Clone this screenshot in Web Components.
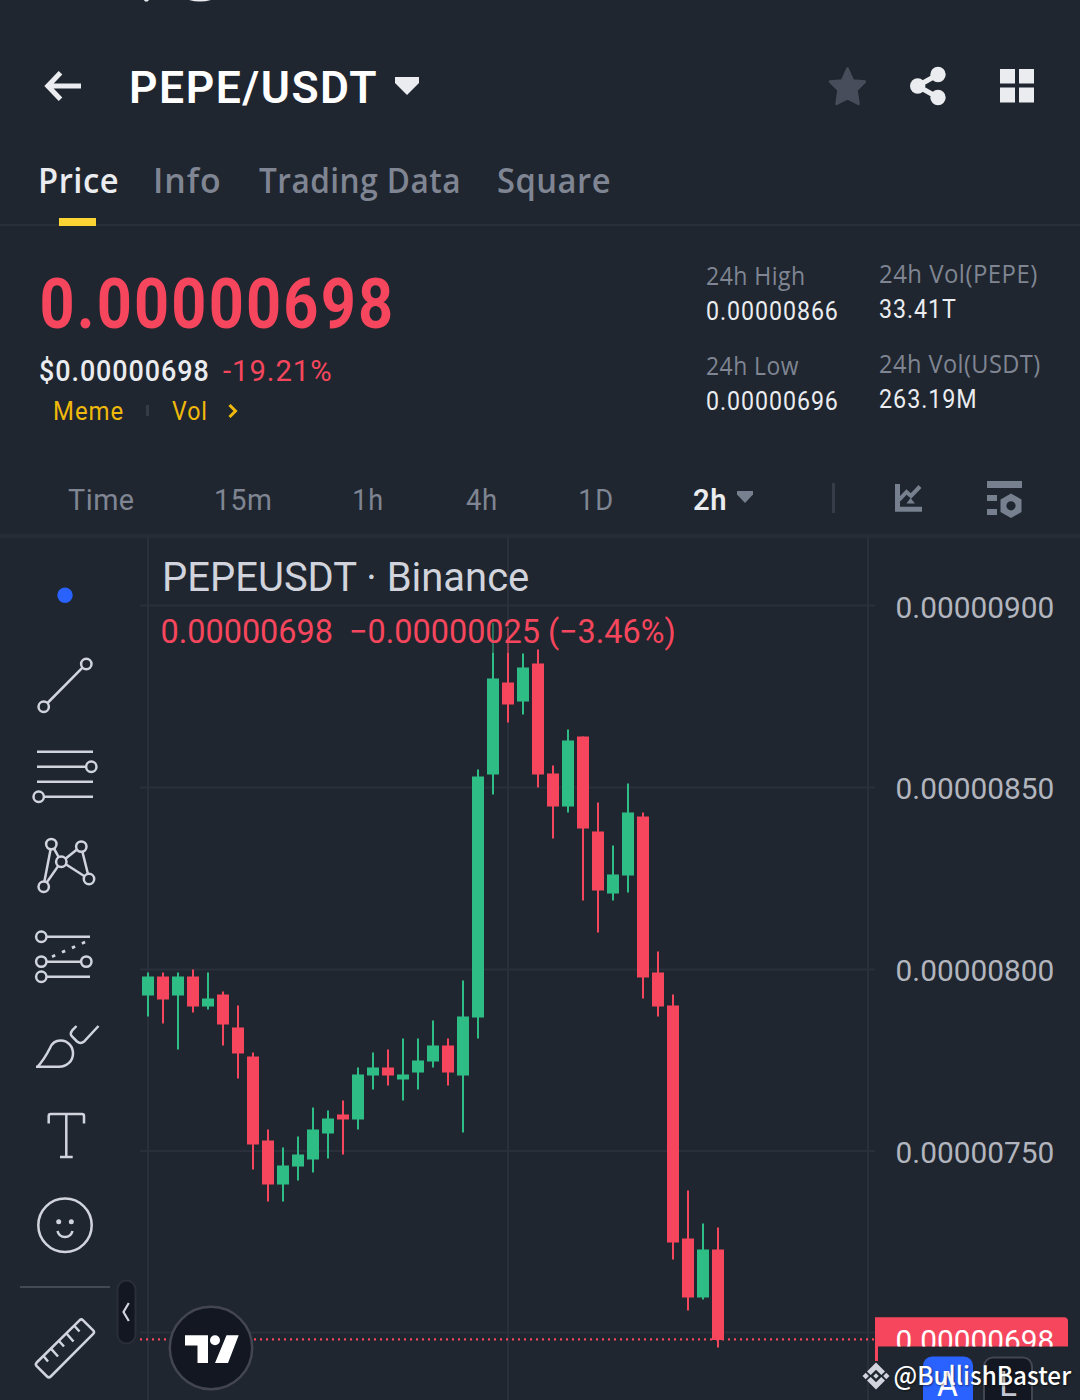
<!DOCTYPE html>
<html lang="en">
<head>
<meta charset="utf-8">
<title>PEPE/USDT</title>
<style>
    html, body {
        margin: 0;
        background: #1f262f;
    }
    body {
        width: 1080px;
        height: 1400px;
        overflow: hidden;
        font-family: Roboto, "Liberation Sans", sans-serif;
        color: #eaecef;
        --line: #2a303b;
        --grey: #7f8592;
        --red: #f6465d;
        --green: #2ebd85;
        --yellow: #f0b90b;
        --tool: #d1d4dc;
        --dark: #131722;
    }
</style>
</head>
<body>

<trade-page></trade-page>

<script>

const ROBOTO = 'Roboto, "Liberation Sans", sans-serif';
const OPEN = '"Open Sans", "Noto Sans", sans-serif';
const CJK = '"Noto Sans CJK SC", "Noto Sans", sans-serif';

const ctx = document.createElement('canvas').getContext('2d');

// svg text whose visible glyphs start at x and are exactly w wide
function inkText(o) {

    const weight = o.weight || 400;
    const family = o.family || ROBOTO;
    const spacing = o.spacing || 0;

    ctx.font = `${weight} ${o.size}px ${family}`;

    const m = ctx.measureText(o.text);
    const ink = m.actualBoundingBoxLeft + m.actualBoundingBoxRight + spacing * (o.text.length - 1);
    const scale = o.w / ink;
    const x = o.x + m.actualBoundingBoxLeft * scale;

    return `<text transform="translate(${x.toFixed(2)} ${o.y}) scale(${scale.toFixed(4)} 1)"
        font-family='${family}' font-size="${o.size}" font-weight="${weight}"
        letter-spacing="${spacing}" fill="${o.fill || 'currentColor'}" ${o.extra || ''}>${o.text}</text>`;
}

// one line of text, the box is as high as its capitals
class FitText extends HTMLElement {

    constructor() {
        super();
        this.attachShadow({mode: "open"});
    }

    connectedCallback() {
        const size = +this.getAttribute('size');
        const w = +this.getAttribute('w');
        const h = Math.round(size * 0.711 * 2) / 2;

        this.shadowRoot.innerHTML = `
            <style>
                :host { display: block; flex: none; width: ${w}px; height: ${h}px; }
                svg { display: block; overflow: visible; }
            </style>
            <svg width="${w}" height="${h}">${inkText({
                text: this.getAttribute('text'),
                x: 0, y: h, w, size,
                weight: this.getAttribute('weight'),
                spacing: +this.getAttribute('spacing'),
                family: this.getAttribute('face') === 'open' ? OPEN : ROBOTO,
            })}</svg>
        `;
    }
}

customElements.define('fit-text', FitText);


class PairHeader extends HTMLElement {

    constructor() {
        super();
        this.attachShadow({mode: "open"});
        this.shadowRoot.innerHTML = `
            <style>
                :host { display: block; height: 142px; }
                .clip { display: block; height: 4px; }
                .bar { display: flex; align-items: center; height: 166px; padding: 0 46px 0 44px; margin-top: -1px; }
                .title { margin: 2px 19px 0 51px; color: #fff; }
                .caret { margin-top: -1px; }
                .grow { flex: 1; }
                svg { display: block; flex: none; }
                .share { margin: 0 54px 0 44px; }
            </style>
            <svg class="clip" width="1080" height="4">
                <path d="M144 0H149L147.500 1.500H145Z" fill="#eaecef"/>
                <path d="M189 0Q200 3.200 211 0Z" fill="#eaecef"/>
            </svg>
            <div class="bar">
                <svg width="37" height="30" viewBox="44 71 37 30" fill="none" stroke="#eaecef" stroke-width="5">
                    <path d="M81 86H48M60.500 72.800L47.800 86L60.500 99.200"/>
                </svg>
                <fit-text class="title" text="PEPE/USDT" w="244" size="45" weight="600" spacing="1.500"></fit-text>
                <svg class="caret" width="24" height="18" viewBox="0 0 24 18" fill="#eaecef"><path d="M0 0H24V6L12 18L0 6Z"/></svg>
                <span class="grow"></span>
                <svg width="38" height="40" viewBox="828 66 38 40" fill="#474d5a" stroke="#474d5a" stroke-width="2.500" stroke-linejoin="round">
                    <path d="M847.500 68.500L853 80.500L865 81.500L856.500 90L858.500 104L847.500 98.500L836.500 104L838.500 90L830 81.500L842 80.500Z"/>
                </svg>
                <svg class="share" width="36" height="40" viewBox="910 65.500 36 40" fill="#eaecef">
                    <path d="M938 74L917.500 85.500L938 97" fill="none" stroke="#eaecef" stroke-width="5"/>
                    <circle cx="938" cy="74" r="7.700"/><circle cx="917.700" cy="85.500" r="7.700"/><circle cx="938" cy="97" r="7.700"/>
                </svg>
                <svg width="34" height="34" viewBox="0 0.500 34 34" fill="#eaecef">
                    <path d="M0 0H15V15H0ZM19 0H34V15H19ZM0 19H15V34H0ZM19 19H34V34H19Z"/>
                </svg>
            </div>
        `;
    }
}

customElements.define('pair-header', PairHeader);


class PageTabs extends HTMLElement {

    constructor() {
        super();
        this.attachShadow({mode: "open"});
        this.shadowRoot.innerHTML = `
            <style>
                :host { display: block; box-sizing: border-box; height: 85px; color: var(--grey); }
                .row { display: flex; gap: 39px; padding: 27px 0 0 41px; height: 50px; }
                .on { color: #eaecef; }
                .line { height: 2px; margin-top: 6px; background: var(--line); }
                i { display: block; width: 37px; height: 8px; margin: -1px 0 -8px 59px; background: #fcd535; position: relative; }
            </style>
            <div class="row">
                <fit-text class="on" text="Price" w="76" size="34" weight="600" spacing="0.500" face="open"></fit-text>
                <fit-text text="Info" w="64" size="34" weight="600" spacing="1" face="open"></fit-text>
                <fit-text text="Trading Data" w="200" size="34" weight="600" spacing="0.500" face="open"></fit-text>
                <fit-text text="Square" w="111" size="34" weight="600" spacing="0.500" face="open"></fit-text>
            </div>
            <i></i>
            <div class="line"></div>
        `;
    }
}

customElements.define('page-tabs', PageTabs);


class StatItem extends HTMLElement {

    constructor() {
        super();
        this.attachShadow({mode: "open"});
    }

    connectedCallback() {
        const a = name => this.getAttribute(name);
        this.shadowRoot.innerHTML = `
            <style>
                :host { display: block; height: 90px; }
                .label { color: var(--grey); margin-bottom: 17px; }
            </style>
            <fit-text class="label" text="${a('label')}" w="${a('lw')}" size="25" spacing="0.500" face="open"></fit-text>
            <fit-text text="${a('value')}" w="${a('vw')}" size="25" weight="450" spacing="1"></fit-text>
        `;
    }
}

customElements.define('stat-item', StatItem);


class PriceSummary extends HTMLElement {

    constructor() {
        super();
        this.attachShadow({mode: "open"});
        this.shadowRoot.innerHTML = `
            <style>
                :host { display: flex; height: 233px; }
                .left { width: 665.500px; padding: 51px 0 0 41.500px; }
                .price { color: var(--red); }
                .usd { display: flex; gap: 15px; margin: 32px 0 20.500px -1.500px; }
                .usd .pct { color: var(--red); }
                .tags { display: flex; align-items: center; margin-left: 13px; color: var(--yellow); }
                .tags i { width: 3px; height: 11px; margin: 0 23px 0 23px; background: #333b47; }
                .tags svg { margin-left: 22px; }
                .col { width: 173px; padding-top: 40px; }
                .col + .col { padding-top: 38px; }
            </style>
            <div class="left">
                <fit-text class="price" text="0.00000698" w="349" size="70.500" weight="700" spacing="2.500"></fit-text>
                <div class="usd">
                    <fit-text text="$0.00000698" w="168" size="29.500" weight="500" spacing="1"></fit-text>
                    <fit-text class="pct" text="-19.21%" w="108" size="29.500" weight="450" spacing="1"></fit-text>
                </div>
                <div class="tags">
                    <fit-text text="Meme" w="68" size="25" spacing="1"></fit-text>
                    <i></i>
                    <fit-text text="Vol" w="34" size="25" spacing="1"></fit-text>
                    <svg width="10" height="14" viewBox="0 0 10 14" fill="none" stroke="#f0b90b" stroke-width="3"><path d="M1.500 1L7.500 7L1.500 13"/></svg>
                </div>
            </div>
            <div class="col">
                <stat-item label="24h High" lw="97" value="0.00000866" vw="130"></stat-item>
                <stat-item label="24h Low" lw="92" value="0.00000696" vw="130"></stat-item>
            </div>
            <div class="col">
                <stat-item label="24h Vol(PEPE)" lw="157" value="33.41T" vw="76"></stat-item>
                <stat-item label="24h Vol(USDT)" lw="160" value="263.19M" vw="95"></stat-item>
            </div>
        `;
    }
}

customElements.define('price-summary', PriceSummary);


class IntervalBar extends HTMLElement {

    constructor() {
        super();
        this.attachShadow({mode: "open"});
        this.shadowRoot.innerHTML = `
            <style>
                :host {
                    display: flex;
                    box-sizing: border-box;
                    align-items: center;
                    height: 78px;
                    padding: 5px 0 0 67.500px;
                    border-bottom: 4px solid #262c36;
                    color: var(--grey);
                }
                svg { flex: none; }
                .on { color: #eaecef; }
                .caret { margin: -5px 79px 0 12px; }
                i { width: 3px; height: 30px; background: #363c48; margin-top: -3px; }
                .ind { margin: -3px 65px 0 60px; }
                .set { margin-top: -1px; }
            </style>
            <fit-text text="Time" w="65.500" size="29.500" spacing="0.500"></fit-text>
            <fit-text style="margin-left:83px" text="15m" w="54" size="29.500" spacing="0.500"></fit-text>
            <fit-text style="margin-left:84px" text="1h" w="28" size="29.500" spacing="1"></fit-text>
            <fit-text style="margin-left:84px" text="4h" w="30" size="29.500" spacing="0.500"></fit-text>
            <fit-text style="margin-left:84px" text="1D" w="32" size="29.500" spacing="2"></fit-text>
            <fit-text class="on" style="margin-left:82px" text="2h" w="31" size="29.500" weight="600" spacing="0.500"></fit-text>
            <svg class="caret" width="16" height="12" viewBox="0 0 16 12" fill="#76808f"><path d="M0 0H16V3.500L8 12L0 3.500Z"/></svg>
            <i></i>
            <svg class="ind" width="27" height="28" viewBox="0 0 27 28" fill="none" stroke="#76808f">
                <path d="M2.500 0V25.200H27" stroke-width="5"/>
                <path d="M4 16L11.500 8L16 12L25 2.500" stroke-width="4"/>
                <path d="M15.500 14L20 19.500H11.500Z" fill="#76808f" stroke="none"/>
            </svg>
            <svg class="set" width="35" height="37" viewBox="0 0 35 37" fill="#76808f">
                <path d="M0 0H35V7H0ZM0 14H10V20H0ZM0 28H10V34H0Z"/>
                <path fill-rule="evenodd" d="M24 12.500L34.500 18.500V31L24 37L13.500 31V18.500ZM24 20.200A4.600 4.600 0 1 0 24 29.400A4.600 4.600 0 1 0 24 20.200Z"/>
            </svg>
        `;
    }
}

customElements.define('interval-bar', IntervalBar);


class DrawTool extends HTMLElement {

    static icons = {
        dot: `<circle cx="65" cy="45.300" r="7.700" fill="#2962ff" stroke="none"/>`,
        trend: `<path d="M47.500 63L82.500 27.700"/><circle cx="43.700" cy="66.700" r="5.200"/><circle cx="86.300" cy="24" r="5.200"/>`,
        lines: `<path d="M37 21.700H93M37 36.700H86M37 51.700H93M44 66.700H93"/>
            <circle cx="91.300" cy="36.700" r="5.200"/><circle cx="38.700" cy="66.700" r="5.200"/>`,
        pattern: `<path d="M50.600 29.200L44.400 61.600M54 28.700L58.700 37.200M65.700 38.500L77 29.500M82.400 31.700L87.900 53.800M65.800 44.300L84.500 56.300M58.300 45.900L46.700 62.500"/>
            <circle cx="51.300" cy="24.100" r="5.200"/><circle cx="81.300" cy="26.600" r="5.200"/><circle cx="61.300" cy="41.700" r="5.200"/>
            <circle cx="89" cy="59" r="5.200"/><circle cx="43.700" cy="66.700" r="5.200"/>`,
        fib: `<path d="M46.500 26.800H90M46.500 51.700H81M46.500 66.700H90"/>
            <path d="M52 46.700L87 31.200" stroke-width="2.800" stroke-dasharray="3.500 7.400"/>
            <circle cx="41.300" cy="26.800" r="5.200"/><circle cx="41.300" cy="51.600" r="5.200"/>
            <circle cx="86.300" cy="51.600" r="5.200"/><circle cx="41.300" cy="66.700" r="5.200"/>`,
        brush: `<path d="M37 67.300C44 60 47 54 50 48C52 43 56 40.500 60.500 40.500C68 40.500 73 46.500 73 53.500C73 61 67 66.800 59 66.800H36"/>
            <path d="M76.500 26L72 30.700Q69.600 33.500 72 36.500L77 41.500Q80.500 44.500 84.500 41.200L98.500 26"/>`,
        text: `<path d="M48.700 33.500V26Q48.700 24 50.700 24H82Q84 24 84 26V33.500M66.300 24V67M60 67H72.700"/>`,
        smile: `<circle cx="65" cy="45.300" r="26.700"/><path d="M57.500 51Q59 57 65 57Q71 57 72.500 51"/>
            <circle cx="58.700" cy="41.800" r="2.500" fill="#d1d4dc" stroke="none"/><circle cx="71.300" cy="41.800" r="2.500" fill="#d1d4dc" stroke="none"/>`,
        ruler: `<path d="M36.700 62.500L79.500 20.300Q81.300 18.500 83.100 20.300L93.200 30.300Q95 32.100 93.200 33.900L50.700 76.500Q48.900 78.300 47.100 76.500L36.700 66.100Q35 64.300 36.700 62.500Z"/>
            <path d="M43.500 56L48 61.500M51 48.700L58 56.500M59 41L64 46.500M66.500 33.500L73.500 41.500M74.500 26L79.500 31.500"/>`,
    }

    constructor() {
        super();
        this.attachShadow({mode: "open"});
    }

    connectedCallback() {
        this.shadowRoot.innerHTML = `
            <style>
                :host { display: block; height: 90px; }
                svg { display: block; fill: none; stroke: var(--tool); stroke-width: 2.500; }
            </style>
            <svg width="130" height="90" viewBox="0 0 130 90">${DrawTool.icons[this.getAttribute('icon')]}</svg>
        `;
    }
}

customElements.define('draw-tool', DrawTool);


class DrawToolbar extends HTMLElement {

    constructor() {
        super();
        this.attachShadow({mode: "open"});
        this.shadowRoot.innerHTML = `
            <style>
                :host { display: block; flex: none; box-sizing: border-box; width: 130px; padding-top: 13px; }
                hr { width: 90px; height: 2px; margin: 16px 20px 12px; border: 0; background: #444954; }
            </style>
            ${['dot', 'trend', 'lines', 'pattern', 'fib', 'brush', 'text', 'smile'].map(n => `<draw-tool icon="${n}"></draw-tool>`).join('')}
            <hr>
            <draw-tool icon="ruler"></draw-tool>
        `;
    }
}

customElements.define('draw-toolbar', DrawToolbar);


// direction, wick top, wick bottom, body top, body bottom
const CANDLES = [
    ['g', 972, 1017, 976, 996], ['r', 972, 1024, 976, 1000], ['g', 972, 1050, 976, 996], ['r', 969, 1013, 976, 1007],
    ['g', 972, 1010, 998, 1007], ['r', 991, 1046, 994, 1025], ['r', 1005, 1079, 1027, 1054], ['r', 1052, 1170, 1056, 1145],
    ['r', 1129, 1202, 1140, 1185], ['g', 1147, 1202, 1165, 1185], ['g', 1136, 1181, 1154, 1167], ['g', 1107, 1173, 1129, 1160],
    ['g', 1110, 1159, 1118, 1134], ['r', 1100, 1155, 1114, 1120], ['g', 1067, 1130, 1074, 1120], ['g', 1052, 1090, 1067, 1076],
    ['r', 1049, 1086, 1067, 1076], ['g', 1038, 1101, 1074, 1080], ['g', 1038, 1090, 1060, 1073], ['g', 1020, 1068, 1045, 1062],
    ['r', 1038, 1086, 1045, 1073], ['g', 980, 1133, 1016, 1076], ['g', 769, 1039, 776, 1018], ['g', 652, 795, 678, 775],
    ['r', 652, 723, 682, 705], ['g', 653, 715, 667, 702], ['r', 649, 788, 663, 775], ['r', 765, 839, 773, 807],
    ['g', 729, 813, 740, 807], ['r', 736, 901, 736, 829], ['r', 802, 933, 831, 891], ['g', 845, 901, 874, 894],
    ['g', 783, 893, 812, 876], ['r', 812, 999, 816, 978], ['r', 951, 1017, 972, 1007], ['r', 994, 1260, 1005, 1243],
    ['r', 1190, 1311, 1238, 1298], ['g', 1223, 1300, 1249, 1298], ['r', 1227, 1348, 1249, 1340.500],
];

class PriceChart extends HTMLElement {

    constructor() {
        super();
        this.attachShadow({mode: "open"});
        this.shadowRoot.innerHTML = `
            <style>
                :host { display: block; flex: none; width: 950px; height: 863px; }
                svg { display: block; overflow: visible; }
                .g { fill: var(--green); }
                .r { fill: var(--red); }
            </style>
            <svg width="950" height="863" viewBox="130 537 950 863">
                ${this.grid}
                <path d="M493 623V652" stroke="#2ebd85" stroke-width="2" opacity=".5"/>
                <path d="M508 628V652" stroke="#f6465d" stroke-width="2" opacity=".5"/>
                ${this.candles}
                ${this.labels}
                ${this.overlays}
            </svg>
        `;
    }

    get grid() {
        return `
            <path d="M148 537V1400M508 537V1400M868 537V1400M140 605.500H875M140 787.500H875M140 969.500H875M140 1151H875M140 1332.500H875"
                stroke="#2a303b" stroke-width="2" fill="none"/>
            <path d="M140 1339.300H875" stroke="#f6465d" stroke-width="2.200" stroke-dasharray="2 4"/>
        `;
    }

    get candles() {
        return CANDLES.map(([c, wt, wb, bt, bb], i) => {
            const x = 148 + 15 * i;
            return `<rect class="${c}" x="${x - 1}" y="${wt + .5}" width="2" height="${wb - wt - 1}"/>
                <rect class="${c}" x="${x - 6}" y="${bt + .5}" width="12" height="${bb - bt - 1}"/>`;
        }).join('');
    }

    get labels() {
        const axis = [['0.00000900', 617.5], ['0.00000850', 798.5], ['0.00000800', 980.5], ['0.00000750', 1162.5]];
        return `
            ${inkText({text: 'PEPEUSDT · Binance', x: 165, y: 590.500, w: 364.500, size: 41, fill: '#d1d4dc'})}
            ${inkText({text: '0.00000698', x: 161.500, y: 642.500, w: 170, size: 33, fill: '#f6465d'})}
            ${inkText({text: '−0.00000025 (−3.46%)', x: 351, y: 642.500, w: 323.500, size: 33, fill: '#f6465d'})}
            ${axis.map(([text, y]) => inkText({text, x: 896.500, y, w: 157, size: 30, fill: '#b2b5be'})).join('')}
        `;
    }

    get overlays() {
        return `
            <rect x="117.500" y="1280.500" width="18" height="63" rx="9" fill="#131722" stroke="#2a2e39" stroke-width="2"/>
            <path d="M128.800 1303L123.500 1312L128.800 1321" fill="none" stroke="#d1d4dc" stroke-width="2.200"/>

            <circle cx="211" cy="1348" r="41.200" fill="#131722" stroke="#434651" stroke-width="2.500"/>
            <path d="M185 1335.300H208V1363H197.500V1345.500H185ZM226.500 1335.300H238.700L228 1363H215Z" fill="#fff"/>
            <circle cx="215" cy="1340.300" r="5" fill="#fff"/>

            <clipPath id="tag"><path d="M875 1317H1080V1346.500H875Z"/></clipPath>
            <path d="M875 1317.300H1064Q1068 1317.300 1068 1321.300V1346.500H878V1361H875Z" fill="#f6465d"/>
            <g clip-path="url(#tag)">${inkText({text: '0.00000698', x: 896.500, y: 1350.500, w: 157, size: 30, fill: '#fff'})}</g>

            <rect x="923" y="1356.500" width="50" height="60" rx="9" fill="#2962ff"/>
            ${inkText({text: 'A', x: 937, y: 1395.500, w: 21, size: 35, fill: '#fff'})}
            <rect x="984" y="1357.500" width="48" height="60" rx="9" fill="#131722" stroke="#434651" stroke-width="2"/>
            ${inkText({text: 'L', x: 1001, y: 1395.500, w: 15, size: 35, fill: '#c3c6d0'})}

            <g fill="#d1d4dc">
                <path d="M876 1362.500L885 1371.500L881.300 1375L876 1369.700L870.700 1375L867 1371.500Z"/>
                <path d="M876 1389.500L885 1380.500L881.300 1377L876 1382.300L870.700 1377L867 1380.500Z"/>
                <path d="M876 1373.200L878.800 1376L876 1378.800L873.200 1376ZM865.700 1372.800L868.900 1376L865.700 1379.200L862.500 1376ZM886.300 1372.800L889.500 1376L886.300 1379.200L883.100 1376Z"/>
            </g>
            ${inkText({text: '@BullishBaster', x: 894.500, y: 1385, w: 177.500, size: 25, weight: 500, family: CJK, fill: '#fff',
                extra: 'style="text-shadow: 1px 1px 2px rgba(0,0,0,.5)"'})}
        `;
    }
}

customElements.define('price-chart', PriceChart);


class TradePage extends HTMLElement {

    constructor() {
        super();
        this.attachShadow({mode: "open"});
        this.shadowRoot.innerHTML = `
            <style>
                :host { display: block; width: 1080px; height: 1400px; overflow: hidden; }
                .chart { display: flex; margin-top: -1px; }
            </style>
            <pair-header></pair-header>
            <page-tabs></page-tabs>
            <price-summary></price-summary>
            <interval-bar></interval-bar>
            <div class="chart">
                <draw-toolbar></draw-toolbar>
                <price-chart></price-chart>
            </div>
        `;
    }
}

customElements.define('trade-page', TradePage);

</script>
</body>
</html>
